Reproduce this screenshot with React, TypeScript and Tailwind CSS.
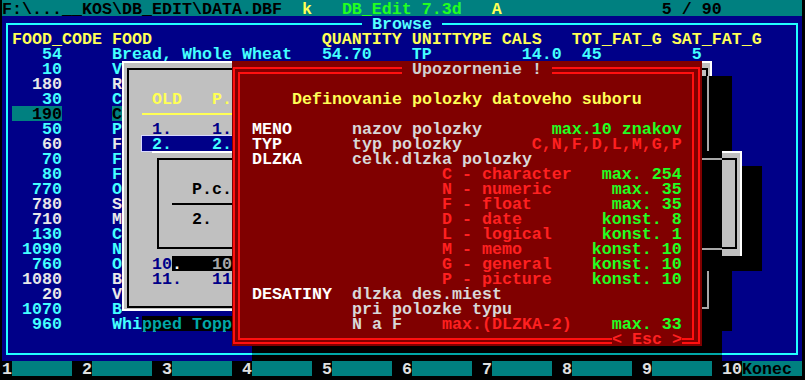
const rows: [string, string, 'c' | 'w' | 'h'][] = [
  ['54', 'Bread, Whole Wheat', 'c'],
  ['10', 'V', 'c'],
  ['180', 'R', 'w'],
  ['30', 'C', 'c'],
  ['190', 'C', 'h'],
  ['50', 'P', 'c'],
  ['60', 'F', 'w'],
  ['70', 'F', 'c'],
  ['80', 'F', 'c'],
  ['770', 'O', 'c'],
  ['780', 'S', 'w'],
  ['710', 'M', 'w'],
  ['130', 'C', 'c'],
  ['1090', 'N', 'c'],
  ['760', 'O', 'c'],
  ['1080', 'B', 'w'],
  ['20', 'V', 'w'],
  ['1070', 'B', 'c'],
  ['960', 'Whipped Topp', 'c'],
]

function TopBar() {
  return (
    <div className="h-[16px] w-[800px] whitespace-pre bg-[#008080] pt-[1px] text-black">
      {'F:\\...__KOS\\DB_EDIT\\DATA.DBF  '}
      <span className="text-[#ffff55]">k</span>
      {'   '}
      <span className="text-[#22ff22]">DB_Edit 7.3d</span>
      {'   '}
      <span className="text-[#ffff55]">A</span>
      {'                5 / 90'}
    </div>
  )
}

function Browse() {
  return (
    <div className="h-[345px] w-[800px] bg-[#000088] pl-[4px] pt-[7px]">
      <div className="relative h-[332px] w-[792px] border-2 border-[#22ffff] pl-[4px] pt-[6px]">
        <div className="absolute left-[354px] top-[-9px] h-[15px] whitespace-pre bg-[#000088] text-[#55ffff]">
          {' Browse '}
        </div>
        <div className="h-[15px] whitespace-pre text-[#ffff55]">
          {'FOOD_CODE FOOD                 QUANTITY UNITTYPE CALS   TOT_FAT_G SAT_FAT_G'}
        </div>
        {rows.map(([code, food, kind], i) => {
          const color = kind === 'w' ? 'text-[#e8e8e8]' : 'text-[#44ffff]'
          const hl = kind === 'h'
          return (
            <div key={i} className="h-[15px] whitespace-pre">
              <span className={hl ? 'inline-block h-[15px] bg-[#008080] align-top text-black' : color}>
                {code.padStart(5)}
              </span>
              {'     '}
              <span className={hl ? 'inline-block h-[15px] bg-[#008080] align-top text-black' : color}>{food}</span>
              {i === 0 && (
                <span className={color}>{'   54.70    TP         14.0  45         5'}</span>
              )}
            </div>
          )
        })}
      </div>
    </div>
  )
}

function KeyBar() {
  const keys = ['1', '2', '3', '4', '5', '6', '7', '8', '9']
  return (
    <div className="flex h-[15px] w-[800px] whitespace-pre">
      {keys.map((k) => (
        <div key={k} className="flex w-[80px]">
          <span className="w-[10px] text-[#e0e0e0]">{k}</span>
          <span className="h-[15px] w-[60px] bg-[#008080]" />
        </div>
      ))}
      <div className="flex w-[80px]">
        <span className="w-[20px] text-[#e0e0e0]">10</span>
        <span className="h-[15px] w-[60px] bg-[#008080] text-black">Konec</span>
      </div>
    </div>
  )
}

function OldWindow() {
  return (
    <div className="absolute left-[122px] top-[61px] h-[250px] w-[590px] bg-[#c0c0c0]">
      <div className="absolute inset-0 border-2 border-white" />
      <div className="absolute bottom-[3px] left-[5px] right-[4px] top-[7px] border-2 border-black" />
      <div className="relative flex flex-col pt-[30px]">
        <div className="h-[15px] whitespace-pre text-[#ffff55]">{'   OLD   P.'}</div>
        <div className="flex h-[15px] items-center pl-[20px]">
          <div className="h-[2px] w-[540px] bg-[#ffff55]" />
        </div>
        <div className="h-[15px] whitespace-pre text-[#000088]">{'   1.    1.'}</div>
        <div className="ml-[20px] h-[15px] w-[560px] whitespace-pre bg-[#000088] text-[#44ffff] outline outline-1 outline-[#d8d8ff]">
          {' 2.    2.'}
        </div>
        <div className="h-[105px]" />
        <div className="h-[15px] whitespace-pre text-[#000088]">{'   10'}</div>
        <div className="h-[15px] whitespace-pre text-[#000088]">{'   11.   11'}</div>
      </div>
    </div>
  )
}

function OldShadow() {
  return (
    <>
      <div className="absolute left-[712px] top-[76px] h-[255px] w-[20px] bg-black" />
      <div className="absolute left-[142px] top-[316px] h-[15px] w-[590px] whitespace-pre bg-black text-[#00a8a8]">
        pped Topp
      </div>
    </>
  )
}

function FieldWindow() {
  return (
    <div className="absolute left-[152px] top-[151px] h-[105px] w-[590px] bg-[#c0c0c0]">
      <div className="absolute inset-0 border-r-2 border-t-2 border-white" />
      <div className="absolute bottom-[7px] left-[5px] right-[5px] top-[7px] border-2 border-black" />
      <div className="relative flex flex-col pt-[30px] text-black">
        <div className="h-[15px] whitespace-pre pl-[40px]">P.c.</div>
        <div className="flex h-[15px] items-center pl-[20px]">
          <div className="h-[2px] w-[540px] bg-black" />
        </div>
        <div className="h-[15px] whitespace-pre pl-[40px]">2.</div>
      </div>
    </div>
  )
}

function FieldShadow() {
  return (
    <>
      <div className="absolute left-[742px] top-[166px] h-[105px] w-[20px] bg-black" />
      <div className="absolute left-[172px] top-[256px] h-[15px] w-[570px] whitespace-pre bg-black">
        <span className="text-white">.</span>
        <span className="text-[#a8a8a8]">{'   10'}</span>
      </div>
    </>
  )
}

function NoticeWindow() {
  const g = 'text-[#22ff22]'
  const r = 'text-[#ff2020]'
  const w = 'text-white'
  const l = 'text-[#d8d8d8]'
  return (
    <div className="absolute left-[232px] top-[61px] h-[285px] w-[470px] bg-[#800000]">
      <div className="absolute bottom-[2px] left-[1px] right-[2px] top-[6px] border-2 border-[#ff1010]" />
      <div className="absolute bottom-[6px] left-[6px] right-[8px] top-[11px] border-2 border-[#ff1010]" />
      <div className="absolute left-[170px] top-0 h-[15px] whitespace-pre bg-[#800000] text-[#d0d0d0]">
        {' Upozornenie ! '}
      </div>
      <div className={`absolute left-[380px] top-[270px] h-[15px] whitespace-pre bg-[#800000] ${r}`}>
        {'< Esc >'}
      </div>
      <div className="relative flex flex-col whitespace-pre pl-[10px] pt-[15px]">
        <div className="h-[15px]" />
        <div className="h-[15px] text-[#ffff55]">{'     Definovanie polozky datoveho suboru'}</div>
        <div className="h-[15px]" />
        <div className="h-[15px]">
          <span className={w}>{' MENO'}</span>
          <span className={l}>{'      nazov polozky'}</span>
          <span className={g}>{'       max.10 znakov'}</span>
        </div>
        <div className="h-[15px]">
          <span className={w}>{' TYP'}</span>
          <span className={l}>{'       typ polozky'}</span>
          <span className={r}>{'       C,N,F,D,L,M,G,P'}</span>
        </div>
        <div className="h-[15px]">
          <span className={w}>{' DLZKA'}</span>
          <span className={l}>{'     celk.dlzka polozky'}</span>
        </div>
        <div className="h-[15px]">
          <span className={r}>{'                    C - character'}</span>
          <span className={g}>{'   max. 254'}</span>
        </div>
        <div className="h-[15px]">
          <span className={r}>{'                    N - numeric'}</span>
          <span className={g}>{'      max. 35'}</span>
        </div>
        <div className="h-[15px]">
          <span className={r}>{'                    F - float'}</span>
          <span className={g}>{'        max. 35'}</span>
        </div>
        <div className="h-[15px]">
          <span className={r}>{'                    D - date'}</span>
          <span className={g}>{'        konst. 8'}</span>
        </div>
        <div className="h-[15px]">
          <span className={r}>{'                    L - logical'}</span>
          <span className={g}>{'     konst. 1'}</span>
        </div>
        <div className="h-[15px]">
          <span className={r}>{'                    M - memo'}</span>
          <span className={g}>{'       konst. 10'}</span>
        </div>
        <div className="h-[15px]">
          <span className={r}>{'                    G - general'}</span>
          <span className={g}>{'    konst. 10'}</span>
        </div>
        <div className="h-[15px]">
          <span className={r}>{'                    P - picture'}</span>
          <span className={g}>{'    konst. 10'}</span>
        </div>
        <div className="h-[15px]">
          <span className={w}>{' DESATINY'}</span>
          <span className={l}>{'  dlzka des.miest'}</span>
        </div>
        <div className={`h-[15px] ${l}`}>{'           pri polozke typu'}</div>
        <div className="h-[15px]">
          <span className={l}>{'           N a F'}</span>
          <span className={r}>{'    max.(DLZKA-2)'}</span>
          <span className={g}>{'    max. 33'}</span>
        </div>
      </div>
    </div>
  )
}

function NoticeShadow() {
  return (
    <>
      <div className="absolute left-[702px] top-[76px] h-[270px] w-[20px] bg-black">
        <div className="absolute left-[5px] top-0 h-[75px] w-[2px] bg-[#a8a8a8]" />
        <div className="absolute left-0 top-[82px] h-[2px] w-[20px] bg-[#a8a8a8]" />
        <div className="absolute left-0 top-[172px] h-[2px] w-[20px] bg-[#a8a8a8]" />
        <div className="absolute left-[5px] top-[195px] h-[38px] w-[2px] bg-[#a8a8a8]" />
        <div className="absolute left-0 top-[231px] h-[2px] w-[7px] bg-[#a8a8a8]" />
      </div>
      <div className="absolute left-[252px] top-[346px] h-[15px] w-[470px] bg-black">
        <div className="mt-[7px] h-[2px] w-full bg-[#00a8a8]" />
      </div>
    </>
  )
}

export default function App() {
  return (
    <div className="relative h-[380px] w-[805px] overflow-hidden bg-black pl-[2px] font-['Liberation_Mono',monospace] text-[16.667px] font-bold leading-[18px]">
      <TopBar />
      <Browse />
      <KeyBar />
      <OldWindow />
      <OldShadow />
      <FieldWindow />
      <FieldShadow />
      <NoticeWindow />
      <NoticeShadow />
    </div>
  )
}
